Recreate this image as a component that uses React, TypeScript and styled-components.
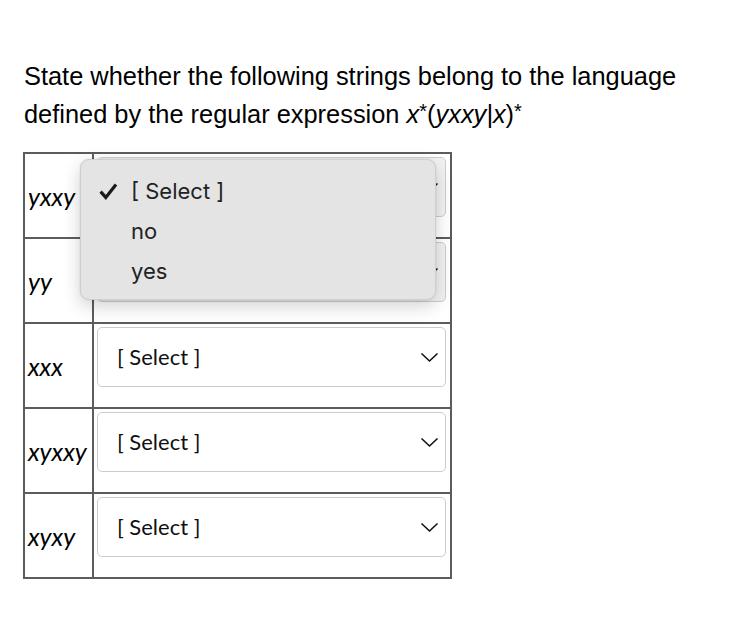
import React from "react";
import styled, { createGlobalStyle } from "styled-components";

const GlobalStyle = createGlobalStyle`
  html, body {
    margin: 0;
    padding: 0;
    background: #ffffff;
  }
`;

const Page = styled.main`
  padding: 57px 24px 40px 23px;
  color: #000;
`;

const Question = styled.p`
  margin: 0 0 17px 1px;
  font-family: "Liberation Sans", Arial, sans-serif;
  font-size: 25.4px;
  line-height: 38px;
  max-width: 690px;
`;

const Sup = styled.span`
  font-style: normal;
  position: relative;
  top: -5px;
  font-size: 20px;
`;

const Table = styled.table`
  border-collapse: collapse;
  table-layout: fixed;
  width: 429px;
  font-family: Lato, "Open Sans", sans-serif;
`;

const LabelCell = styled.td`
  border: 2px solid #5c5c5c;
  width: 69px;
  padding: 0 0 0 3px;
  vertical-align: middle;
  font-style: italic;
  font-size: 25px;
  box-sizing: border-box;
  white-space: nowrap;
`;

const SelectCell = styled.td`
  border: 2px solid #5c5c5c;
  padding: 3px 4px 20px 3px;
  vertical-align: top;
  box-sizing: border-box;
`;

const SelectWrap = styled.div`
  position: relative;
`;

const SelectBox = styled.div<{ $dimmed?: boolean }>`
  height: 60px;
  box-sizing: border-box;
  border: 1px solid #c9cdd1;
  border-radius: 5px;
  background: ${(p) => (p.$dimmed ? "#f2f2f2" : "#ffffff")};
  display: flex;
  align-items: center;
  justify-content: space-between;
  padding: 0 6px 0 19px;
  font-size: 22px;
  color: #111;
`;

const SelectText = styled.span`
  margin-top: -2px;
`;

const Chevron = () => (
  <svg width="19" height="11" viewBox="0 0 19 11" fill="none">
    <path d="M1.5 1.5 L9.5 9 L17.5 1.5" stroke="#111" strokeWidth="1.6" />
  </svg>
);

const Menu = styled.div`
  position: absolute;
  left: -17px;
  top: 2px;
  width: 356px;
  height: 141px;
  box-sizing: border-box;
  background: #e4e4e4;
  border: 1px solid #cfcfcf;
  border-radius: 9px;
  box-shadow: 0 6px 18px rgba(0, 0, 0, 0.18), 0 0 2px rgba(0, 0, 0, 0.12);
  padding: 11px 0 0 0;
  z-index: 2;
  font-family: Inter, "Liberation Sans", sans-serif;
  font-size: 22px;
  color: #222;
`;

const MenuItem = styled.div`
  display: flex;
  align-items: center;
  height: 40px;
  padding-left: 18px;
`;

const CheckSlot = styled.span`
  width: 32px;
  display: flex;
  align-items: center;
`;

const Check = () => (
  <svg width="19" height="17" viewBox="0 0 19 17" fill="none">
    <path d="M1.6 8.6 L6.8 14.4 L17 1.6" stroke="#1a1a1a" strokeWidth="3.2" strokeLinejoin="miter" />
  </svg>
);

const rows = ["yxxy", "yy", "xxx", "xyxxy", "xyxy"];
const options = ["[ Select ]", "no", "yes"];

export default function App() {
  return (
    <>
      <GlobalStyle />
      <Page>
        <Question>
          State whether the following strings belong to the language defined by the regular expression{" "}
          <i>x</i>
          <Sup>*</Sup>(<i>yxxy|x</i>)<Sup>*</Sup>
        </Question>
        <Table>
          <tbody>
            {rows.map((label, i) => (
              <tr key={label}>
                <LabelCell>{label}</LabelCell>
                <SelectCell>
                  <SelectWrap>
                    <SelectBox $dimmed={i < 2}>
                      <SelectText>[ Select ]</SelectText>
                      <Chevron />
                    </SelectBox>
                    {i === 0 && (
                      <Menu>
                        {options.map((o, j) => (
                          <MenuItem key={o}>
                            <CheckSlot>{j === 0 && <Check />}</CheckSlot>
                            {o}
                          </MenuItem>
                        ))}
                      </Menu>
                    )}
                  </SelectWrap>
                </SelectCell>
              </tr>
            ))}
          </tbody>
        </Table>
      </Page>
    </>
  );
}
